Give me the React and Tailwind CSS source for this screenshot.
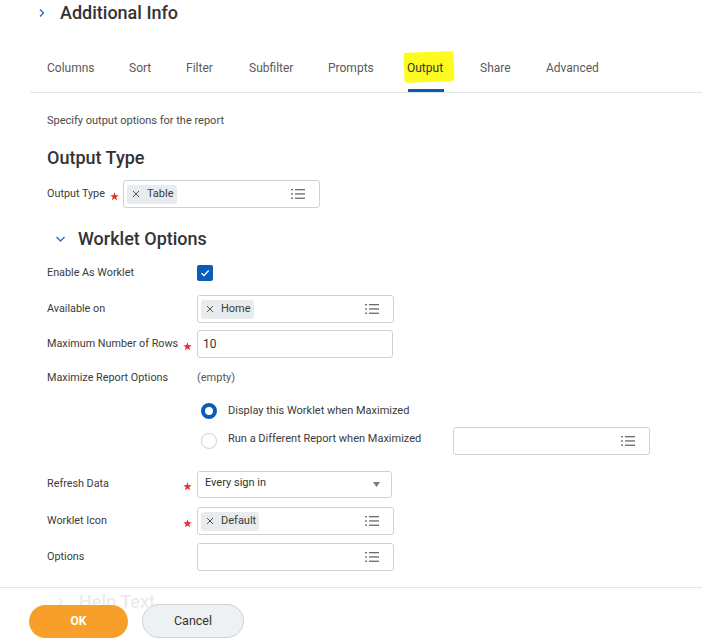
import React from "react";

const ListIcon = () => (
  <svg width="14" height="12" viewBox="0 0 14 12" className="shrink-0">
    <g fill="#6b6b6b">
      <rect x="0" y="1" width="2" height="1.3" />
      <rect x="4" y="1" width="10" height="1.3" />
      <rect x="0" y="5.3" width="2" height="1.3" />
      <rect x="4" y="5.3" width="10" height="1.3" />
      <rect x="0" y="9.6" width="2" height="1.3" />
      <rect x="4" y="9.6" width="10" height="1.3" />
    </g>
  </svg>
);

const Star = () => (
  <svg width="9" height="9" viewBox="0 0 10 10" className="shrink-0">
    <polygon
      fill="#e0322b"
      points="5,0.3 6.2,3.6 9.7,3.6 6.9,5.8 7.9,9.3 5,7.2 2.1,9.3 3.1,5.8 0.3,3.6 3.8,3.6"
    />
  </svg>
);

const XIcon = () => (
  <svg width="8" height="8" viewBox="0 0 8 8" className="shrink-0">
    <path d="M1 1 L7 7 M7 1 L1 7" stroke="#555" strokeWidth="1" />
  </svg>
);

const Chip = ({ text }) => (
  <span className="flex items-center gap-[7px] h-[19px] bg-[#e8ecef] rounded-[3px] pl-[5px] pr-[3px] text-[11px] text-[#3a3a3a]">
    <XIcon />
    {text}
  </span>
);

const Prompt = ({ chip, w = "w-[197px]" }) => (
  <div
    className={`${w} h-[28px] border border-[#cfd2d4] rounded-[3px] bg-white flex items-center justify-between pl-[3px] pr-[14px]`}
  >
    {chip ? <Chip text={chip} /> : <span />}
    <ListIcon />
  </div>
);

const Label = ({ text, req }) => (
  <div className="w-[150px] shrink-0 flex items-center justify-between pr-[5px] text-[10.8px] text-[#3b3b3b]">
    <span>{text}</span>
    {req ? <span className="mt-[4px]"><Star /></span> : null}
  </div>
);

const ChevronRight = ({ color = "#2f6db3" }) => (
  <svg width="8" height="10" viewBox="0 0 8 10">
    <path d="M2 1.5 L5.5 5 L2 8.5" fill="none" stroke={color} strokeWidth="1.4" />
  </svg>
);

const tabs = [
  ["Columns", "w-[82px]"],
  ["Sort", "w-[57px]"],
  ["Filter", "w-[63px]"],
  ["Subfilter", "w-[79px]"],
  ["Prompts", "w-[79px]"],
  ["Output", "w-[73px]"],
  ["Share", "w-[66px]"],
  ["Advanced", "w-[80px]"],
];

export default function App() {
  return (
    <div
      className="relative w-[702px] h-[643px] overflow-hidden bg-white text-[#333]"
      style={{ fontFamily: "Roboto, 'Noto Sans', sans-serif" }}
    >
      {/* Header */}
      <div className="flex items-center h-[26px] pl-[38px]">
        <ChevronRight />
        <span className="ml-[14px] text-[18px] font-medium leading-[24px] text-[#333]">
          Additional Info
        </span>
      </div>

      {/* Tabs */}
      <div className="mt-[18px] ml-[30px] border-b border-[#e3e3e3] flex pl-[17px]">
        {tabs.map(([t, w]) => {
          const active = t === "Output";
          return (
            <div key={t} className={`${w} h-[48px] shrink-0 relative flex items-center`}>
              {active ? (
                <>
                  <span className="relative text-[12px] text-[#333]">
                    <span className="absolute left-[-3px] right-[-11px] top-[-7px] bottom-[-5px] bg-[#fbfb1f] rounded-[3px] -rotate-2" />
                    <span className="relative">{t}</span>
                  </span>
                  <span className="absolute bottom-0 left-[1px] w-[36px] h-[3px] bg-[#0b5cb5]" />
                </>
              ) : (
                <span className="text-[12px] text-[#5a5a5a]">{t}</span>
              )}
            </div>
          );
        })}
      </div>

      {/* Content */}
      <div className="pl-[47px]">
        <div className="mt-[20px] text-[11px] leading-[16px] text-[#4a4a4a]">
          Specify output options for the report
        </div>
        <div className="mt-[17px] text-[18px] font-medium leading-[24px] text-[#333]">
          Output Type
        </div>
        <div className="mt-[10px] flex items-center">
          <span className="text-[10.8px] text-[#3b3b3b]">Output Type</span>
          <span className="ml-[5px] mr-[4px] mt-[4px]"><Star /></span>
          <Prompt chip="Table" />
        </div>

        <div className="mt-[19px] flex items-center h-[24px] pl-[8px]">
          <svg width="11" height="8" viewBox="0 0 11 8">
            <path d="M1.5 2 L5.5 6 L9.5 2" fill="none" stroke="#2f6db3" strokeWidth="1.4" />
          </svg>
          <span className="ml-[12px] text-[18px] font-medium leading-[24px] text-[#333]">
            Worklet Options
          </span>
        </div>

        {/* Enable as worklet */}
        <div className="mt-[8px] flex items-center h-[28px]">
          <Label text="Enable As Worklet" />
          <div className="w-[16px] h-[16px] rounded-[2px] bg-[#0b5cba] flex items-center justify-center">
            <svg width="10" height="8" viewBox="0 0 10 8">
              <path d="M1.5 4.2 L4 6.5 L8.7 1.5" fill="none" stroke="white" strokeWidth="1.3" />
            </svg>
          </div>
        </div>

        <div className="mt-[8px] flex items-center">
          <Label text="Available on" />
          <Prompt chip="Home" />
        </div>

        <div className="mt-[7px] flex items-center">
          <Label text="Maximum Number of Rows" req />
          <div className="w-[196px] h-[28px] border border-[#cfd2d4] rounded-[3px] flex items-center pl-[5px] text-[12px] text-[#333]">
            10
          </div>
        </div>

        <div className="mt-[10px] flex items-center h-[20px]">
          <Label text="Maximize Report Options" />
          <span className="text-[11px] text-[#555]">(empty)</span>
        </div>

        <div className="mt-[13px] flex items-center h-[20px] pl-[154px]">
          <span className="w-[16px] h-[16px] rounded-full border-[4px] border-[#0b5cba] bg-white" />
          <span className="ml-[11px] text-[11px] text-[#3b3b3b]">Display this Worklet when Maximized</span>
        </div>

        <div className="mt-[6px] flex items-center h-[28px] pl-[154px]">
          <div className="w-[252px] flex items-center">
            <span className="w-[16px] h-[16px] rounded-full border border-[#cfd2d4] bg-white" />
            <span className="ml-[11px] text-[11px] text-[#3b3b3b] -mt-[3px]">Run a Different Report when Maximized</span>
          </div>
          <Prompt />
        </div>

        <div className="mt-[16px] flex items-center">
          <Label text="Refresh Data" req />
          <div className="w-[195px] h-[27px] border border-[#cfd2d4] rounded-[3px] flex items-center justify-between pl-[7px] pr-[11px] text-[11px] text-[#333]">
            <span className="-mt-[2px]">Every sign in</span>
            <svg width="7" height="5" viewBox="0 0 7 5">
              <path d="M0 0 H7 L3.5 5 Z" fill="#7a7a7a" />
            </svg>
          </div>
        </div>

        <div className="mt-[9px] flex items-center">
          <Label text="Worklet Icon" req />
          <Prompt chip="Default" />
        </div>

        <div className="mt-[8px] flex items-center">
          <Label text="Options" />
          <Prompt />
        </div>

        <div className="mt-[19px] flex items-center h-[24px] pl-[10px]">
          <ChevronRight color="#333" />
          <span className="ml-[14px] text-[18px] font-medium leading-[24px] text-[#333]">
            Help Text
          </span>
        </div>
      </div>

      {/* Footer overlay */}
      <div className="absolute left-0 right-0 top-[587px] bottom-0 border-t border-[#e6e6e6] bg-white/90">
        <div className="flex items-center gap-[14px] pl-[29px] pt-[16px]">
          <button className="w-[99px] h-[33px] rounded-full bg-[#f89f29] text-white text-[12px] font-bold">
            OK
          </button>
          <button className="w-[102px] h-[34px] rounded-full bg-[#eef1f3] border border-[#cdd2d6] text-[#333] text-[12.5px]">
            Cancel
          </button>
        </div>
      </div>
    </div>
  );
}
